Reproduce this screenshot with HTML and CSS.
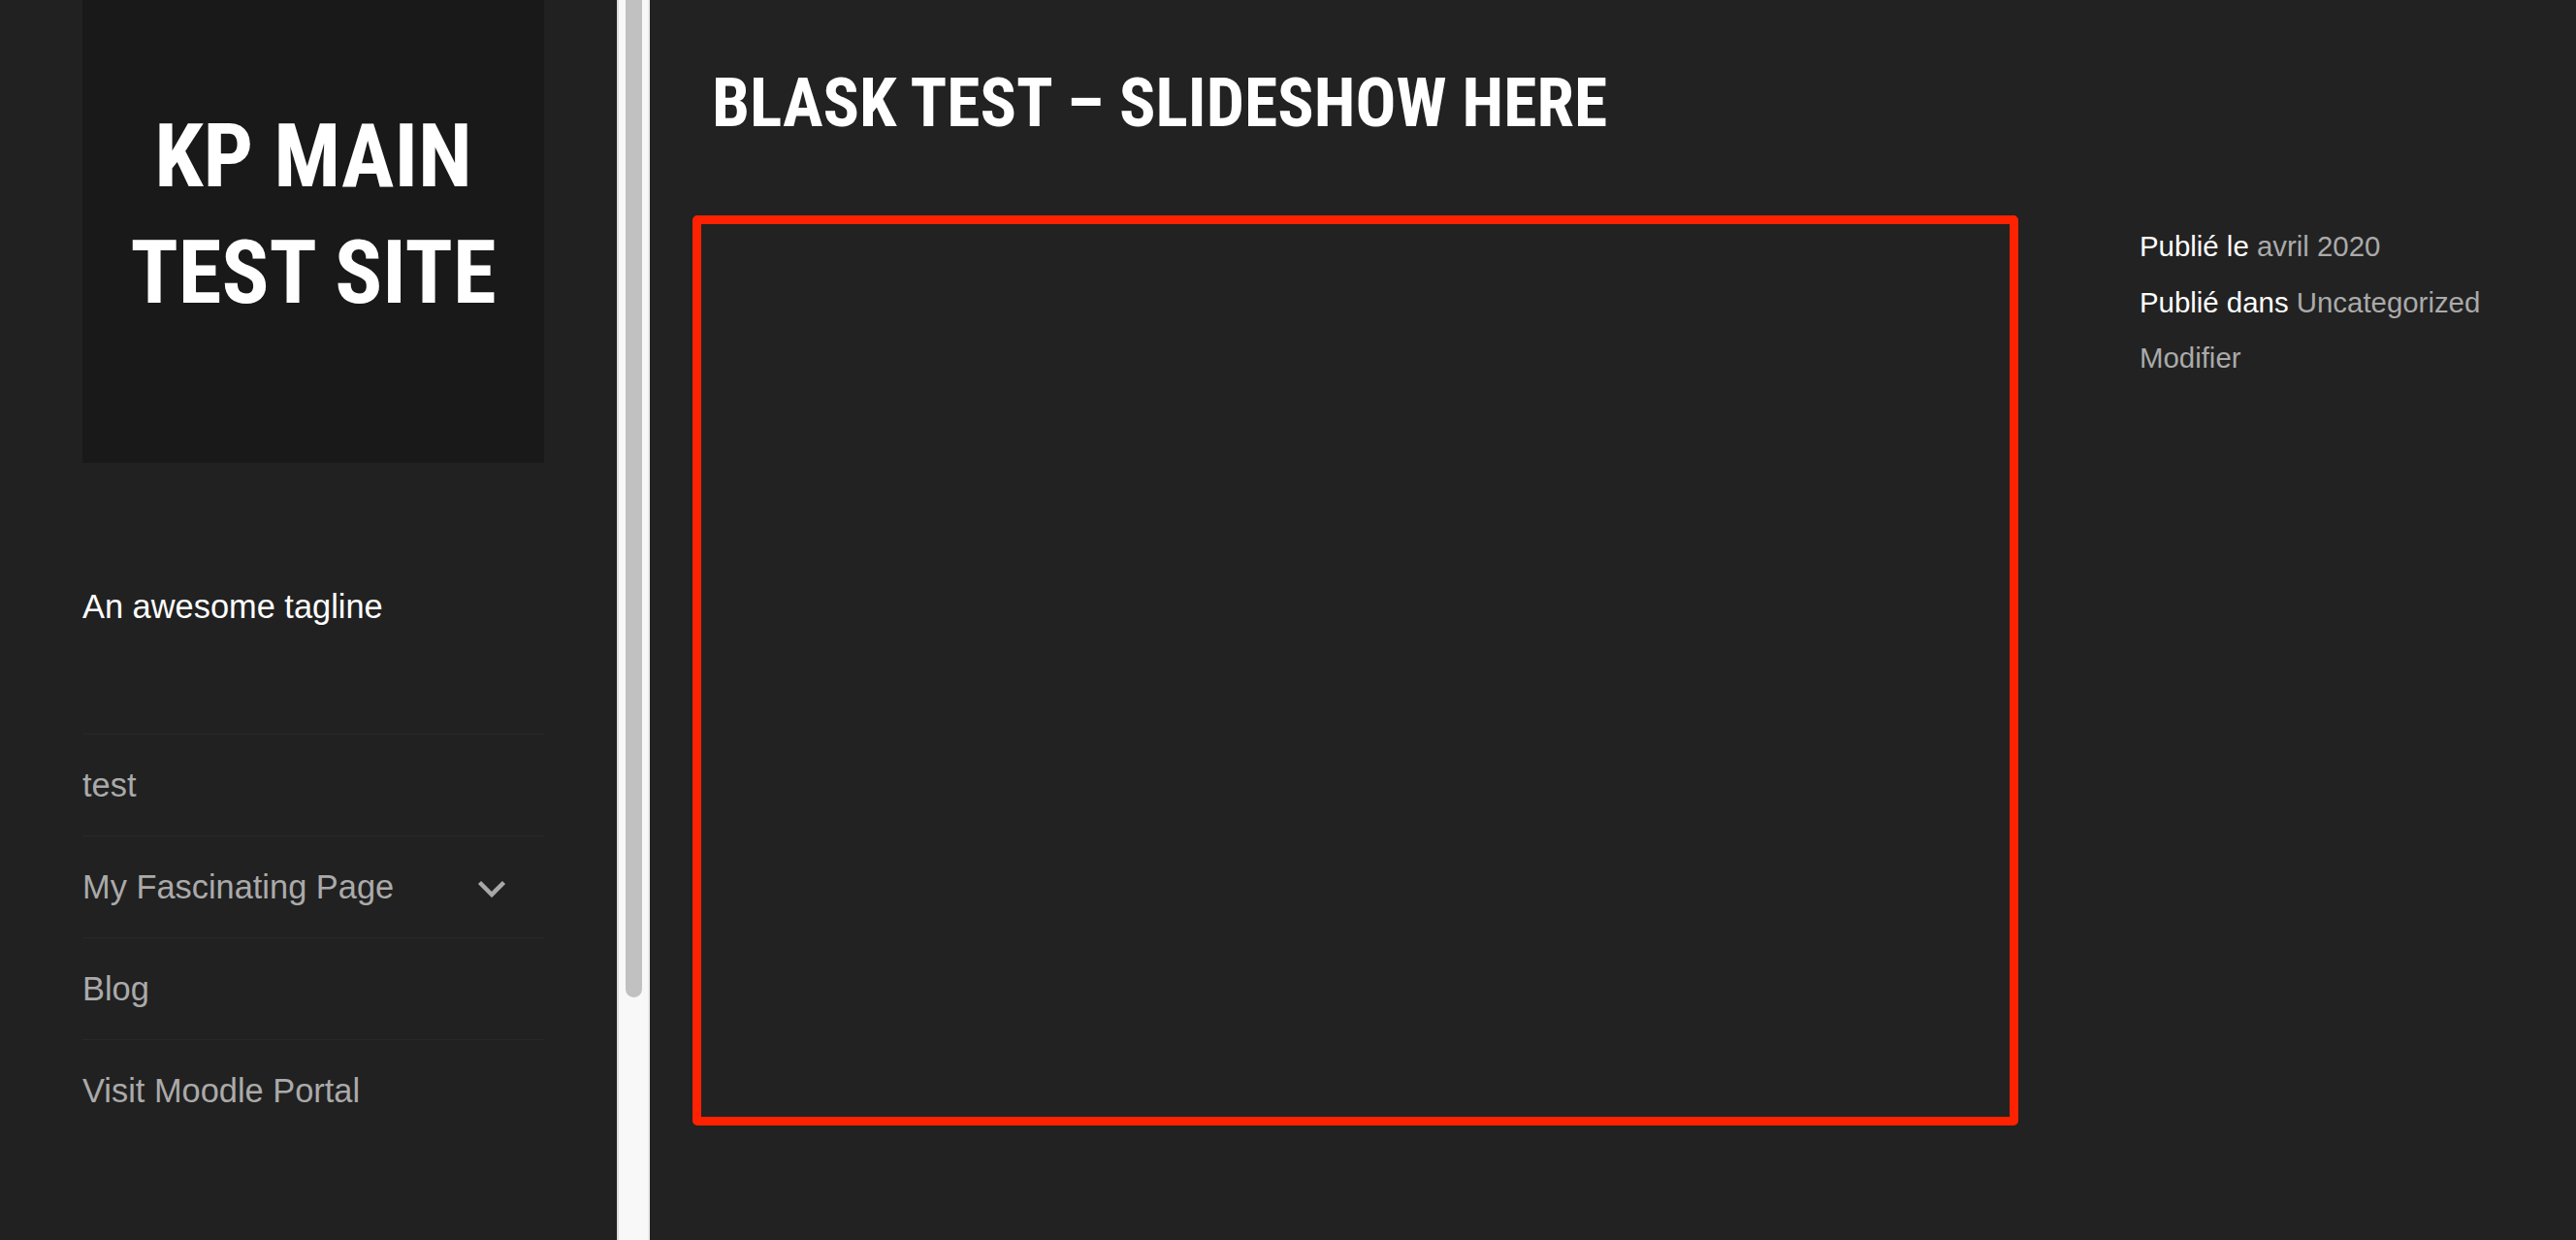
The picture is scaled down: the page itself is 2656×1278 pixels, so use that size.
FILE: index.html
```html
<!DOCTYPE html>
<html lang="fr">
<head>
<meta charset="utf-8">
<title>KP Main Test Site</title>
<link rel="stylesheet" href="styles.css">
</head>
<body>
  <aside class="sidebar">
    <div class="brand">
      <a class="site-title" href="#">KP MAIN TEST SITE</a>
    </div>
    <p class="tagline">An awesome tagline</p>
    <nav class="menu">
      <ul>
        <li class="menu-item"><a href="#">test</a></li>
        <li class="menu-item has-sub">
          <a href="#">My Fascinating Page</a>
          <svg class="chevron" width="30" height="18" viewBox="0 0 30 18"><polyline points="2.5,2.5 15,15 27.5,2.5" /></svg>
        </li>
        <li class="menu-item"><a href="#">Blog</a></li>
        <li class="menu-item"><a href="#">Visit Moodle Portal</a></li>
      </ul>
    </nav>
  </aside>
  <div class="scrollbar"><div class="thumb"></div></div>
  <main class="content">
    <h1 class="entry-title">BLASK TEST – SLIDESHOW HERE</h1>
    <div class="entry">
      <div class="slideshow"></div>
      <ul class="meta">
        <li><span class="label">Publié le</span> <a href="#">avril 2020</a></li>
        <li><span class="label">Publié dans</span> <a href="#">Uncategorized</a></li>
        <li><a href="#">Modifier</a></li>
      </ul>
    </div>
  </main>
</body>
</html>
```
FILE: styles.css
```css
html, body {
  margin: 0;
  padding: 0;
  height: 100%;
}
body {
  display: flex;
  height: 1278px;
  overflow: hidden;
  background: #222222;
  font-family: "Liberation Sans", Arial, sans-serif;
  color: #ffffff;
}
a {
  text-decoration: none;
  color: inherit;
}

/* Sidebar */
.sidebar {
  width: 476px;
  flex: none;
  padding: 0 75px 0 85px;
  background: #212121;
}
.brand {
  height: 477px;
  box-sizing: border-box;
  background: #191919;
  padding: 101px 40px 0;
  text-align: center;
}
.site-title {
  font-family: "Roboto Condensed", "Roboto", sans-serif;
  font-stretch: condensed;
  font-weight: 700;
  font-size: 91px;
  line-height: 120px;
  color: #ffffff;
}
.tagline {
  margin: 123px 0 0;
  font-size: 34.4px;
  line-height: 51px;
  color: #ffffff;
}
.menu ul {
  list-style: none;
  margin: 105px 0 0;
  padding: 0;
}
.menu-item {
  display: flex;
  align-items: center;
  justify-content: space-between;
  height: 105px;
  box-sizing: border-box;
  border-top: 1px solid #292929;
  font-size: 34.4px;
  line-height: 104px;
  color: #aaaaaa;
}
.chevron {
  margin-right: 39px;
  margin-top: 4px;
}
.chevron polyline {
  fill: none;
  stroke: #a8a8a8;
  stroke-width: 4.5;
}

/* Fake scrollbar of the sidebar */
.scrollbar {
  width: 30px;
  flex: none;
  background: #f8f8f8;
  border-left: 2px solid #dcdcdc;
  border-right: 2px solid #ebebeb;
  display: flex;
  justify-content: center;
}
.thumb {
  width: 17px;
  height: 1028px;
  margin-left: 1px;
  background: #c1c1c1;
  border-radius: 0 0 9px 9px;
}

/* Main content */
.content {
  flex: 1;
  padding-left: 44px;
}
.entry-title {
  margin: 64px 0 0 20px;
  font-family: "Roboto Condensed", "Roboto", sans-serif;
  font-stretch: condensed;
  font-weight: 700;
  font-size: 69.6px;
  line-height: 84px;
  color: #ffffff;
}
.entry {
  display: flex;
  margin-top: 74px;
}
.slideshow {
  width: 1367px;
  height: 938px;
  box-sizing: border-box;
  border: 9px solid #ff2200;
  border-radius: 5px;
}
.meta {
  list-style: none;
  margin: 3px 0 0 125px;
  padding: 0;
  font-size: 29.4px;
  line-height: 57.5px;
  color: #aaaaaa;
}
.meta .label {
  color: #ffffff;
}
```
